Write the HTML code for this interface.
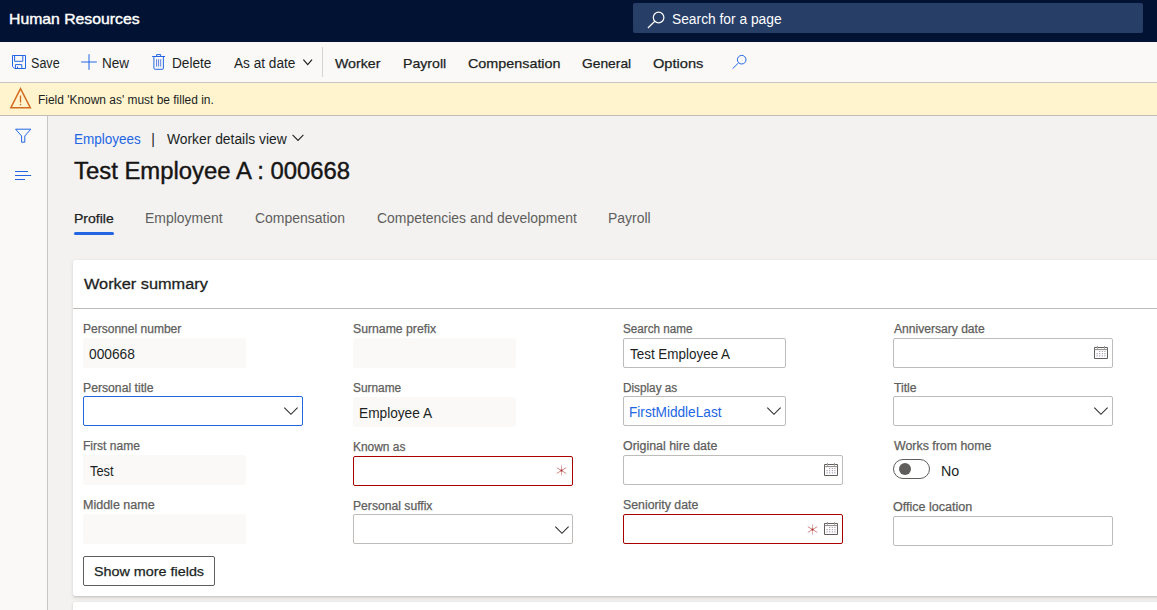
<!DOCTYPE html>
<html><head><meta charset="utf-8"><title>Human Resources</title>
<style>
html,body{margin:0;padding:0;}
body{width:1157px;height:610px;overflow:hidden;position:relative;background:#f3f2f1;font-family:"Liberation Sans",sans-serif;}
.a{position:absolute;box-sizing:border-box;}
.t{transform-origin:0 0;position:absolute;line-height:0;white-space:pre;font-family:"Liberation Sans",sans-serif;}
svg{position:absolute;overflow:visible;}
.ro{background:#faf9f8;border-radius:2px;}
.in{background:#fff;border:1px solid #bebbb8;border-radius:2px;}
.in.red{border-color:#a80000;}
.in.blue{border-color:#2266e3;}
.t i{display:inline-block;width:0;height:30px;}

</style></head><body>
<!-- header -->
<div class="a" style="left:0;top:0;width:1157px;height:42px;background:#021232;"></div>
<div class="a" style="left:633px;top:3px;width:510px;height:30px;background:#273e67;border-radius:2px;"></div>
<svg style="left:647px;top:11px;" width="18" height="18" viewBox="0 0 18 18"><circle cx="11.6" cy="6.5" r="5.3" fill="none" stroke="#fff" stroke-width="1.2"/><path d="M7.8 10.3 L0.9 17" stroke="#fff" stroke-width="1.2" fill="none"/></svg>
<!-- toolbar -->
<div class="a" style="left:0;top:42px;width:1157px;height:41px;background:#faf9f8;border-bottom:1px solid #c8c6c4;"></div>
<div class="a" style="left:322px;top:47px;width:1px;height:30px;background:#d6d4d2;"></div>
<!-- save icon -->
<svg style="left:12px;top:55px;" width="14" height="14" viewBox="0 0 14 14"><path d="M0.5 0.5 H13.5 V13.5 H2.6 L0.5 11.4 Z M2.6 0.5 V6.3 H10.8 V0.5 M3.4 13.5 V9.6 H9.8 V13.5 M5.5 13.5 V11.6" fill="none" stroke="#2266e3" stroke-width="1"/></svg>
<!-- plus icon -->
<svg style="left:81px;top:54px;" width="16" height="16" viewBox="0 0 16 16"><path d="M8 0.2 V15.8 M0.2 8 H15.8" stroke="#2266e3" stroke-width="1" fill="none"/></svg>
<!-- trash icon -->
<svg style="left:152px;top:54px;" width="14" height="16" viewBox="0 0 14 16"><path d="M0.2 2.5 H13 M4.6 2.5 V0.6 H8.6 V2.5 M1.9 2.5 V14 Q1.9 15.3 3.2 15.3 H10.1 Q11.4 15.3 11.4 14 V2.5" stroke="#2266e3" stroke-width="1" fill="none"/><path d="M4.6 5.2 V12.6 M6.6 5.2 V12.6 M8.7 5.2 V12.6" stroke="#4a6fe0" stroke-width="0.9" fill="none"/></svg>
<!-- as at date chevron -->
<svg style="left:303px;top:59px;" width="10" height="7" viewBox="0 0 10 7"><path d="M0.4 0.6 L4.7 5.6 L9 0.6" stroke="#201f1e" stroke-width="1.2" fill="none"/></svg>
<!-- toolbar search -->
<svg style="left:732px;top:54px;" width="16" height="16" viewBox="0 0 16 16"><circle cx="9.7" cy="5.7" r="4.3" fill="none" stroke="#2266e3" stroke-width="1"/><path d="M6.6 8.8 L0.6 14.7" stroke="#2266e3" stroke-width="1" fill="none"/></svg>
<!-- warning -->
<div class="a" style="left:0;top:83px;width:1157px;height:33px;background:#fff4ce;border-bottom:1px solid #bebbb8;"></div>
<svg style="left:10px;top:87px;" width="22" height="22" viewBox="0 0 22 22"><path d="M10.5 1.6 L20.4 20.8 H0.8 Z" fill="none" stroke="#d26b1f" stroke-width="1.45" stroke-linejoin="miter"/><path d="M10.5 8.4 V15.4 M10.5 16.8 V18.2" stroke="#d26b1f" stroke-width="1.3" fill="none"/></svg>
<!-- sidebar -->
<div class="a" style="left:0;top:116px;width:48px;height:494px;background:#faf9f8;border-right:1px solid #c8c6c4;"></div>
<svg style="left:15px;top:128px;" width="17" height="16" viewBox="0 0 17 16"><path d="M0.6 1.2 H15.8 L9.8 8 V14.2 H6.6 V8 Z" fill="none" stroke="#2266e3" stroke-width="1" stroke-linejoin="round"/></svg>
<svg style="left:15px;top:170px;" width="17" height="11" viewBox="0 0 17 11"><path d="M0 1.5 H13 M0 5.5 H16.2 M0 9.5 H10" stroke="#2266e3" stroke-width="1" fill="none"/></svg>
<!-- breadcrumb chevron -->
<svg style="left:292.3px;top:134.4px;" width="12" height="8" viewBox="0 0 12 8"><path d="M0.6 0.8 L6 6.4 L11.4 0.8" stroke="#201f1e" stroke-width="1.05" fill="none"/></svg>
<!-- active tab underline -->
<div class="a" style="left:74px;top:232px;width:40px;height:3px;background:#2266e3;border-radius:1.5px;"></div>
<!-- card -->
<div class="a" style="left:73px;top:260px;width:1100px;height:336px;background:#fff;border-radius:2px;box-shadow:0 1.6px 3.6px rgba(0,0,0,.13),0 .3px .9px rgba(0,0,0,.07);"></div>
<div class="a" style="left:73px;top:308px;width:1084px;height:1px;background:#bdbab7;"></div>
<div class="a" style="left:73px;top:602px;width:1100px;height:20px;background:#fff;border-radius:2px;box-shadow:0 1.6px 3.6px rgba(0,0,0,.13),0 .3px .9px rgba(0,0,0,.07);"></div>
<!-- col 1 -->
<div class="a ro" style="left:83px;top:338px;width:163px;height:30px;"></div>
<div class="a in blue" style="left:83px;top:396px;width:220px;height:30px;"></div>
<div class="a ro" style="left:83px;top:455px;width:163px;height:30px;"></div>
<div class="a ro" style="left:83px;top:514px;width:163px;height:30px;"></div>
<div class="a" style="left:83px;top:556px;width:132px;height:30px;background:#fff;border:1px solid #605e5c;border-radius:2px;"></div>
<!-- col 2 -->
<div class="a ro" style="left:353px;top:338px;width:163px;height:30px;"></div>
<div class="a ro" style="left:353px;top:397px;width:163px;height:30px;"></div>
<div class="a in red" style="left:353px;top:456px;width:220px;height:30px;"></div>
<div class="a in" style="left:353px;top:514px;width:220px;height:30px;"></div>
<!-- col 3 -->
<div class="a in" style="left:623px;top:338px;width:163px;height:30px;"></div>
<div class="a in" style="left:623px;top:396px;width:163px;height:30px;"></div>
<div class="a in" style="left:623px;top:455px;width:220px;height:30px;"></div>
<div class="a in red" style="left:623px;top:514px;width:220px;height:30px;"></div>
<!-- col 4 -->
<div class="a in" style="left:893px;top:338px;width:220px;height:30px;"></div>
<div class="a in" style="left:893px;top:396px;width:220px;height:30px;"></div>
<div class="a" style="left:893px;top:459px;width:37px;height:20px;border:1px solid #605e5c;border-radius:10px;background:#fff;"></div>
<div class="a" style="left:899px;top:463px;width:12px;height:12px;border-radius:6px;background:#605e5c;"></div>
<div class="a in" style="left:893px;top:516px;width:220px;height:30px;"></div>
<!-- chevrons in dropdowns -->
<svg style="left:284px;top:407.4px;" width="14" height="9" viewBox="0 0 14 9"><path d="M0.3 0.7 L6.95 7.3 L13.6 0.7" stroke="#323130" stroke-width="1.15" fill="none"/></svg>
<svg style="left:554.5px;top:525.5px;" width="14" height="9" viewBox="0 0 14 9"><path d="M0.3 0.7 L6.95 7.3 L13.6 0.7" stroke="#323130" stroke-width="1.15" fill="none"/></svg>
<svg style="left:767px;top:407.4px;" width="14" height="9" viewBox="0 0 14 9"><path d="M0.3 0.7 L6.95 7.3 L13.6 0.7" stroke="#323130" stroke-width="1.15" fill="none"/></svg>
<svg style="left:1094px;top:407.4px;" width="14" height="9" viewBox="0 0 14 9"><path d="M0.3 0.7 L6.95 7.3 L13.6 0.7" stroke="#323130" stroke-width="1.15" fill="none"/></svg>
<!-- asterisks -->
<svg style="left:555.7px;top:465.2px;" width="11" height="11" viewBox="0 0 11 11"><path d="M5.5 0.4 V10.6" stroke="#d9a0a0" stroke-width="0.9" fill="none"/><path d="M0.8 2.7 L10.2 8.4 M10.2 2.7 L0.8 8.4" stroke="#c66" stroke-width="0.8" fill="none"/><circle cx="5.5" cy="5.5" r="1" fill="#a4262c"/></svg>
<svg style="left:806.7px;top:524.3px;" width="11" height="11" viewBox="0 0 11 11"><path d="M5.5 0.4 V10.6" stroke="#d9a0a0" stroke-width="0.9" fill="none"/><path d="M0.8 2.7 L10.2 8.4 M10.2 2.7 L0.8 8.4" stroke="#c66" stroke-width="0.8" fill="none"/><circle cx="5.5" cy="5.5" r="1" fill="#a4262c"/></svg>
<!-- calendars -->
<svg style="left:1094px;top:345.6px;" width="14" height="13" viewBox="0 0 14 13"><path d="M0.5 1.5 H13.5 V12.5 H0.5 Z" fill="#fff" stroke="#605e5c" stroke-width="1"/><path d="M0.5 3.6 H13.5" stroke="#8a8886" stroke-width="1"/><path d="M3.5 0 V2.8 M10.5 0 V2.8" stroke="#a19f9d" stroke-width="1"/><path d="M5.2 5.5 h1 m1.6 0 h1 m1.6 0 h1 M2.6 7.6 h1 m1.6 0 h1 m1.6 0 h1 m1.6 0 h1 M2.6 9.8 h1 m1.6 0 h1 m1.6 0 h1 m1.6 0 h1" stroke="#9a93a8" stroke-width="1.2"/></svg>
<svg style="left:824px;top:462.8px;" width="14" height="13" viewBox="0 0 14 13"><path d="M0.5 1.5 H13.5 V12.5 H0.5 Z" fill="#fff" stroke="#605e5c" stroke-width="1"/><path d="M0.5 3.6 H13.5" stroke="#8a8886" stroke-width="1"/><path d="M3.5 0 V2.8 M10.5 0 V2.8" stroke="#a19f9d" stroke-width="1"/><path d="M5.2 5.5 h1 m1.6 0 h1 m1.6 0 h1 M2.6 7.6 h1 m1.6 0 h1 m1.6 0 h1 m1.6 0 h1 M2.6 9.8 h1 m1.6 0 h1 m1.6 0 h1 m1.6 0 h1" stroke="#9a93a8" stroke-width="1.2"/></svg>
<svg style="left:824px;top:521.8px;" width="14" height="13" viewBox="0 0 14 13"><path d="M0.5 1.5 H13.5 V12.5 H0.5 Z" fill="#fff" stroke="#605e5c" stroke-width="1"/><path d="M0.5 3.6 H13.5" stroke="#8a8886" stroke-width="1"/><path d="M3.5 0 V2.8 M10.5 0 V2.8" stroke="#a19f9d" stroke-width="1"/><path d="M5.2 5.5 h1 m1.6 0 h1 m1.6 0 h1 M2.6 7.6 h1 m1.6 0 h1 m1.6 0 h1 m1.6 0 h1 M2.6 9.8 h1 m1.6 0 h1 m1.6 0 h1 m1.6 0 h1" stroke="#9a93a8" stroke-width="1.2"/></svg>

<div class="t" style="left:9.16px;top:-6.00px;font-size:14.5px;color:#ffffff;transform:scaleX(1.0874);-webkit-text-stroke:0.4px #ffffff;"><i></i>Human Resources</div>
<div class="t" style="left:672.30px;top:-5.70px;font-size:14px;color:#ffffff;transform:scaleX(0.9850);"><i></i>Search for a page</div>
<div class="t" style="left:31.09px;top:37.70px;font-size:14px;color:#201f1e;transform:scaleX(0.8977);"><i></i>Save</div>
<div class="t" style="left:101.89px;top:37.70px;font-size:14px;color:#201f1e;transform:scaleX(0.9655);"><i></i>New</div>
<div class="t" style="left:171.51px;top:37.70px;font-size:14px;color:#201f1e;transform:scaleX(0.9743);"><i></i>Delete</div>
<div class="t" style="left:234.22px;top:37.70px;font-size:14px;color:#201f1e;transform:scaleX(0.9741);"><i></i>As at date</div>
<div class="t" style="left:335.15px;top:37.70px;font-size:13.5px;color:#201f1e;transform:scaleX(1.0500);-webkit-text-stroke:0.25px #201f1e;"><i></i>Worker</div>
<div class="t" style="left:402.77px;top:37.70px;font-size:13.5px;color:#201f1e;transform:scaleX(1.0459);-webkit-text-stroke:0.25px #201f1e;"><i></i>Payroll</div>
<div class="t" style="left:467.51px;top:37.70px;font-size:13.5px;color:#201f1e;transform:scaleX(1.0627);-webkit-text-stroke:0.25px #201f1e;"><i></i>Compensation</div>
<div class="t" style="left:581.93px;top:37.70px;font-size:13.5px;color:#201f1e;transform:scaleX(1.0229);-webkit-text-stroke:0.25px #201f1e;"><i></i>General</div>
<div class="t" style="left:653.08px;top:37.70px;font-size:13.5px;color:#201f1e;transform:scaleX(1.0832);-webkit-text-stroke:0.25px #201f1e;"><i></i>Options</div>
<div class="t" style="left:38.09px;top:73.60px;font-size:12px;color:#201f1e;transform:scaleX(0.9950);"><i></i>Field &#x27;Known as&#x27; must be filled in.</div>
<div class="t" style="left:73.90px;top:114.10px;font-size:14px;color:#2266e3;transform:scaleX(0.9645);"><i></i>Employees</div>
<div class="t" style="left:151.35px;top:114.10px;font-size:14px;color:#201f1e;"><i></i>|</div>
<div class="t" style="left:167.24px;top:114.10px;font-size:14px;color:#201f1e;transform:scaleX(0.9880);"><i></i>Worker details view</div>
<div class="t" style="left:74.10px;top:148.80px;font-size:23.5px;color:#161514;transform:scaleX(1.0161);-webkit-text-stroke:0.4px #161514;"><i></i>Test Employee A : 000668</div>
<div class="t" style="left:73.99px;top:193.20px;font-size:13.5px;color:#201f1e;transform:scaleX(1.0374);-webkit-text-stroke:0.25px #201f1e;"><i></i>Profile</div>
<div class="t" style="left:145.39px;top:193.20px;font-size:14px;color:#605e5c;transform:scaleX(0.9965);"><i></i>Employment</div>
<div class="t" style="left:255.24px;top:193.20px;font-size:14px;color:#605e5c;transform:scaleX(0.9979);"><i></i>Compensation</div>
<div class="t" style="left:376.72px;top:193.20px;font-size:14px;color:#605e5c;transform:scaleX(0.9950);"><i></i>Competencies and development</div>
<div class="t" style="left:608.37px;top:193.20px;font-size:14px;color:#605e5c;transform:scaleX(0.9960);"><i></i>Payroll</div>
<div class="t" style="left:83.94px;top:258.90px;font-size:15.5px;color:#201f1e;transform:scaleX(1.0519);-webkit-text-stroke:0.3px #201f1e;"><i></i>Worker summary</div>
<div class="t" style="left:83.15px;top:303.00px;font-size:12px;color:#605e5c;transform:scaleX(1.0026);-webkit-text-stroke:0.25px #605e5c;"><i></i>Personnel number</div>
<div class="t" style="left:83.12px;top:361.90px;font-size:12px;color:#605e5c;transform:scaleX(1.0167);-webkit-text-stroke:0.25px #605e5c;"><i></i>Personal title</div>
<div class="t" style="left:83.10px;top:420.10px;font-size:12px;color:#605e5c;transform:scaleX(1.0035);-webkit-text-stroke:0.25px #605e5c;"><i></i>First name</div>
<div class="t" style="left:83.07px;top:479.10px;font-size:12px;color:#605e5c;transform:scaleX(1.0428);-webkit-text-stroke:0.25px #605e5c;"><i></i>Middle name</div>
<div class="t" style="left:353.44px;top:303.00px;font-size:12px;color:#605e5c;transform:scaleX(1.0200);-webkit-text-stroke:0.25px #605e5c;"><i></i>Surname prefix</div>
<div class="t" style="left:353.45px;top:361.90px;font-size:12px;color:#605e5c;transform:scaleX(0.9885);-webkit-text-stroke:0.25px #605e5c;"><i></i>Surname</div>
<div class="t" style="left:353.31px;top:421.30px;font-size:12px;color:#605e5c;transform:scaleX(0.9946);-webkit-text-stroke:0.25px #605e5c;"><i></i>Known as</div>
<div class="t" style="left:353.20px;top:480.00px;font-size:12px;color:#605e5c;transform:scaleX(1.0122);-webkit-text-stroke:0.25px #605e5c;"><i></i>Personal suffix</div>
<div class="t" style="left:623.46px;top:303.00px;font-size:12px;color:#605e5c;transform:scaleX(0.9731);-webkit-text-stroke:0.25px #605e5c;"><i></i>Search name</div>
<div class="t" style="left:623.18px;top:361.90px;font-size:12px;color:#605e5c;transform:scaleX(0.9793);-webkit-text-stroke:0.25px #605e5c;"><i></i>Display as</div>
<div class="t" style="left:623.31px;top:420.10px;font-size:12px;color:#605e5c;transform:scaleX(1.0324);-webkit-text-stroke:0.25px #605e5c;"><i></i>Original hire date</div>
<div class="t" style="left:623.42px;top:479.10px;font-size:12px;color:#605e5c;transform:scaleX(1.0258);-webkit-text-stroke:0.25px #605e5c;"><i></i>Seniority date</div>
<div class="t" style="left:893.90px;top:303.00px;font-size:12px;color:#605e5c;transform:scaleX(1.0068);-webkit-text-stroke:0.25px #605e5c;"><i></i>Anniversary date</div>
<div class="t" style="left:893.91px;top:361.90px;font-size:12px;color:#605e5c;transform:scaleX(1.0142);-webkit-text-stroke:0.25px #605e5c;"><i></i>Title</div>
<div class="t" style="left:893.76px;top:420.10px;font-size:12px;color:#605e5c;transform:scaleX(1.0312);-webkit-text-stroke:0.25px #605e5c;"><i></i>Works from home</div>
<div class="t" style="left:893.38px;top:481.10px;font-size:12px;color:#605e5c;transform:scaleX(1.0457);-webkit-text-stroke:0.25px #605e5c;"><i></i>Office location</div>
<div class="t" style="left:88.51px;top:328.80px;font-size:14px;color:#201f1e;transform:scaleX(0.9821);"><i></i>000668</div>
<div class="t" style="left:89.54px;top:446.30px;font-size:14px;color:#201f1e;transform:scaleX(0.9192);"><i></i>Test</div>
<div class="t" style="left:359.28px;top:387.70px;font-size:14px;color:#201f1e;transform:scaleX(0.9773);"><i></i>Employee A</div>
<div class="t" style="left:629.52px;top:328.80px;font-size:14px;color:#201f1e;transform:scaleX(0.9595);"><i></i>Test Employee A</div>
<div class="t" style="left:629.28px;top:386.60px;font-size:14px;color:#2266e3;transform:scaleX(0.9744);"><i></i>FirstMiddleLast</div>
<div class="t" style="left:941.43px;top:445.70px;font-size:14px;color:#201f1e;transform:scaleX(1.0184);"><i></i>No</div>
<div class="t" style="left:93.92px;top:546.10px;font-size:13.5px;color:#201f1e;transform:scaleX(1.0626);-webkit-text-stroke:0.25px #201f1e;"><i></i>Show more fields</div>
</body></html>
